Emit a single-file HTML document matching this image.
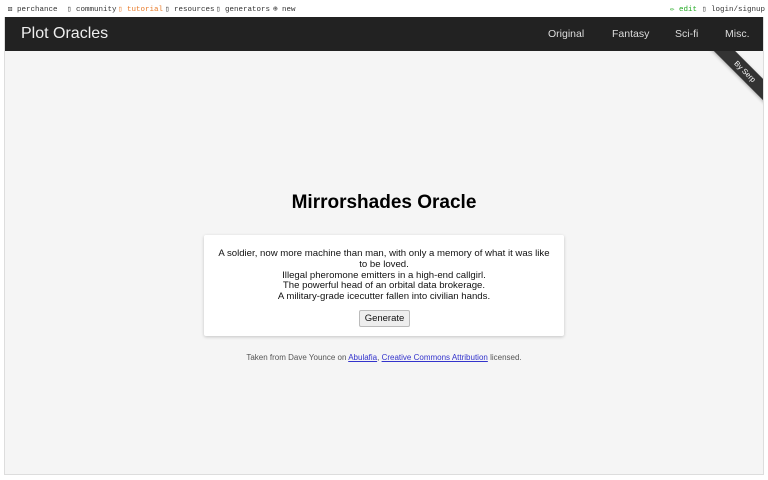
<!DOCTYPE html>
<html><head><style>
body{margin:0;width:768px;height:480px;background:#fff;font-family:"Liberation Sans",Arial,sans-serif;position:relative;overflow:hidden}
.top{position:absolute;top:0;left:0;right:0;height:17px;font-family:"Liberation Mono",monospace;font-size:7.5px;color:#333}
.top span{position:absolute;top:4px;white-space:nowrap}
.page{position:absolute;left:4px;top:17px;width:758px;height:457px;background:#f5f5f5;border:1px solid #ddd;border-top:none;overflow:hidden}
.nav{position:absolute;left:0;top:0;width:758px;height:34px;background:#222;color:#eee;z-index:2}
.nav .brand{position:absolute;left:16px;top:8px;font-size:16px;color:#eee}
.nav a{position:absolute;top:11px;font-size:10.5px;color:#ddd}
.ribbon{position:absolute;left:685px;top:47px;width:110px;height:15px;background:#333;color:#fff;font-size:7.5px;text-align:center;line-height:15px;transform:rotate(45deg);box-shadow:0 1px 3px rgba(0,0,0,.3);z-index:1}
h1{position:absolute;left:0;width:758px;top:175px;margin:0;text-align:center;font-size:19px;font-weight:bold;color:#000}
.card{position:absolute;left:199px;top:218px;width:360px;height:101px;background:#fff;box-shadow:0 1px 3px rgba(0,0,0,.2);border-radius:2px;text-align:center;font-size:9.6px;line-height:10.8px;color:#111}
.card .t{padding:14px 10px 0}
.btn{position:absolute;left:155px;top:75px;width:49px;height:15px;border:1px solid #bbb;background:#eee;font-size:9.5px;line-height:15px;border-radius:2px}
.foot{position:absolute;left:0;width:758px;top:336px;text-align:center;font-size:8px;color:#555}
.foot a{color:#33c;text-decoration:underline}
</style></head><body>
<div class="top">
<span style="left:8px">⚄ perchance</span>
<span style="left:67px">▯ community</span>
<span style="left:118px;color:#e87b2a">▯ tutorial</span>
<span style="left:165px">▯ resources</span>
<span style="left:216px">▯ generators</span>
<span style="left:273px">⊕ new</span>
<span style="left:670px;color:#2a2">✏ edit</span>
<span style="left:702px">▯ login/signup</span>
</div>
<div class="page">
<div class="nav"><div class="brand">Plot Oracles</div>
<a style="left:543px">Original</a><a style="left:607px">Fantasy</a><a style="left:670px">Sci-fi</a><a style="left:720px">Misc.</a></div>
<div class="ribbon">By Serp</div>
<h1>Mirrorshades Oracle</h1>
<div class="card"><div class="t">A soldier, now more machine than man, with only a memory of what it was like to be loved.<br>Illegal pheromone emitters in a high-end callgirl.<br>The powerful head of an orbital data brokerage.<br>A military-grade icecutter fallen into civilian hands.</div>
<div class="btn">Generate</div></div>
<div class="foot">Taken from Dave Younce on <a>Abulafia</a>, <a>Creative Commons Attribution</a> licensed.</div>
</div>
</body></html>
